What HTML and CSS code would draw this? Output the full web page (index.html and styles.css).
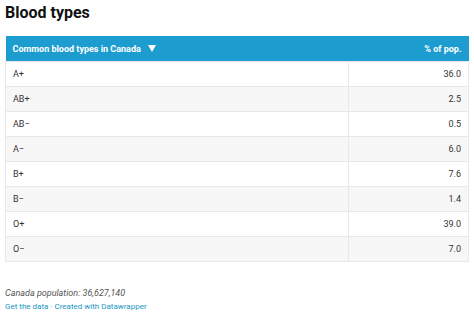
FILE: index.html
```
<!DOCTYPE html>
<html>
<head>
<meta charset="utf-8">
<link rel="stylesheet" href="styles.css">
</head>
<body>
<div class="chart">
  <h1 class="title">Blood types</h1>
  <table class="tbl">
    <thead>
      <tr><th class="c1"><span class="hd">Common blood types in Canada</span><svg class="arrow" width="8" height="7" viewBox="0 0 8 7"><polygon points="0,0 8,0 4,7" fill="#fff"/></svg></th><th class="c2">% of pop.</th></tr>
    </thead>
    <tbody>
      <tr><td class="c1">A+</td><td class="c2">36.0</td></tr>
      <tr class="alt"><td class="c1">AB+</td><td class="c2">2.5</td></tr>
      <tr><td class="c1">AB−</td><td class="c2">0.5</td></tr>
      <tr class="alt"><td class="c1">A−</td><td class="c2">6.0</td></tr>
      <tr><td class="c1">B+</td><td class="c2">7.6</td></tr>
      <tr class="alt"><td class="c1">B−</td><td class="c2">1.4</td></tr>
      <tr><td class="c1">O+</td><td class="c2">39.0</td></tr>
      <tr class="alt"><td class="c1">O−</td><td class="c2">7.0</td></tr>
    </tbody>
  </table>
  <div class="footer">
    <div class="note">Canada population: 36,627,140</div>
    <div class="links"><a>Get the data</a> · <a>Created with Datawrapper</a></div>
  </div>
</div>
</body>
</html>
```
FILE: styles.css
```
html, body { margin: 0; padding: 0; background: #fff; }
body { font-family: Roboto, "Noto Sans", sans-serif; color: #333; }
.chart { padding: 0 5px 0 5px; }
.title { margin: 0; padding: 1px 0 0 0; font-size: 16px; font-weight: 700; color: #111; line-height: 24px; }
.tbl { margin-top: 11px; width: 464px; border-collapse: collapse; font-size: 9px; }
.tbl th { background: #1c9ccf; color: #fff; font-weight: 700; height: 25px; padding: 0 7px; text-align: left; }
.tbl th.c2 { text-align: right; }
.hd { vertical-align: middle; }
.arrow { margin-left: 7px; vertical-align: middle; }
.tbl td { height: 24px; padding: 0 7px; border: 1px solid #e8e8e8; color: #333; }
.tbl td.c1 { width: 328px; }
.tbl td.c2 { text-align: right; }
.tbl tr.alt td { background: #f7f7f7; }
.footer { margin-top: 25px; font-size: 9px; line-height: 13px; }
.note { font-style: italic; color: #555; }
.links { color: #1a97c2; font-size: 8px; }
.links a { color: #1a97c2; }
```
